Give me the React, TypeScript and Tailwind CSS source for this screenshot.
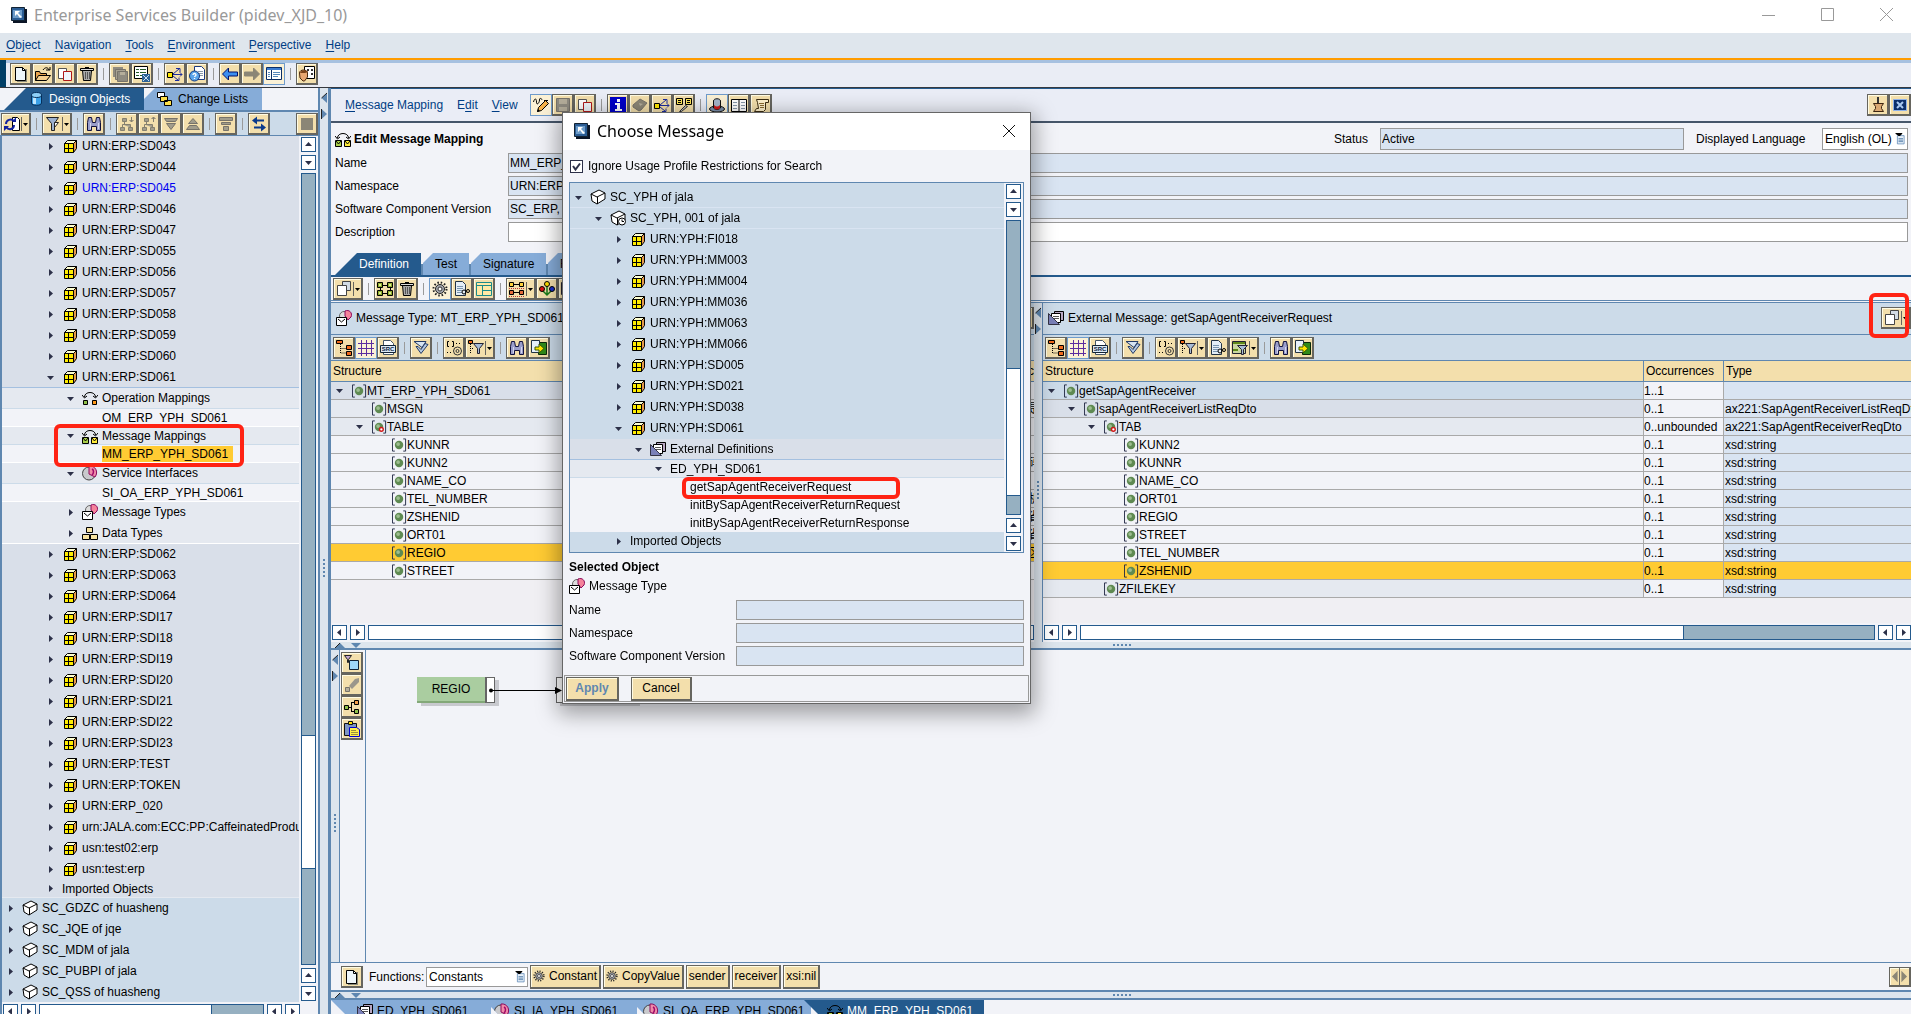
import { ReactNode } from "react";

/* ---------- Icons (16x16 grid) ---------- */

const ICONS: Record<string, ReactNode> = {
  app: (
    <>
      <path d="M2 2h14v14H2z" fill="#0b1526" />
      <path d="M.5.5h13v13H.5z" fill="#2b5d94" stroke="#123" />
      <path d="M2 3h9v8H2z" fill="#6d9cc9" />
      <path d="M4 4h5L7 6l4 4-2 1-3-4-2 2z" fill="#fff" />
    </>
  ),
  page: (
    <>
      <path d="M4 3h10v13H4z" fill="#8b8b7a" />
      <path d="M2.500 1.500h7l3 3v10h-10z" fill="#eef6fb" stroke="#000" />
      <path d="M9.500 1.500v3h3" stroke="#000" />
    </>
  ),
  open: (
    <>
      <path d="M.5 14.500v-9h4l1 2h6v2" fill="#e8a34d" stroke="#000" />
      <path d="M.5 14.500l3-5h12l-4 5z" fill="#f7d08e" stroke="#000" />
      <path d="M8 4c2-3 5-3 6 0m-3 0h4V1" stroke="#000" />
    </>
  ),
  copy: (
    <>
      <path d="M1.500 2.500h8v10h-8z" fill="#fff" stroke="#555" />
      <path d="M6.500 5.500h8v9h-8z" fill="#eef6fb" stroke="#b01818" />
    </>
  ),
  trash: (
    <>
      <path d="M3.500 4.500h9l-1 10h-7z" fill="#aaa" stroke="#000" />
      <path d="M1.500 2.500h13v2h-13zM6 1.500h4" fill="#ddd" stroke="#000" />
      <path d="M6.500 6v7M8.500 6v7M10.500 6v7" stroke="#555" />
    </>
  ),
  saveAll: (
    <>
      <path d="M1 1h10v10H1z" fill="#8f8b80" />
      <path d="M3.500 3.500h10v10h-10z" fill="#a8a292" stroke="#77736a" />
      <path d="M5.500 5.500h10v10h-10z" fill="#8f8b80" stroke="#77736a" />
      <path d="M8 6h5v3H8z" fill="#b5ae9b" />
    </>
  ),
  listX: (
    <>
      <path d="M.5.5h13v12H.5z" fill="#fff" stroke="#000" />
      <path d="M2 3.500h3m1 0h6M2 6.500h3m1 0h6M2 9.500h3m1 0h2" stroke="#275c28" />
      <path d="M8 8h8v8H8z" fill="#2d6296" />
      <path d="M9 9l6 6m0-6l-6 6" stroke="#cfe0f2" />
    </>
  ),
  whereUsed: (
    <>
      <path d="M.5 6.500h5v5h-5z" fill="#ffe800" stroke="#000" />
      <path d="M6 8.500h9M6 8l6-5M6 10l5 4M13 6.500l2 2-2 2M9 2.500h4v4M8 14.500h4v-3" stroke="#1d2c9c" />
    </>
  ),
  helpDoc: (
    <>
      <path d="M5.500.5h7l3 3v10h-10z" fill="#fff" stroke="#1b3a80" />
      <path d="M9 5.500h5M9 7.500h5M10 9.500h4" stroke="#89a" />
      <circle cx="5.500" cy="10" r="5" fill="#5aa4ea" stroke="#123a80" />
      <path d="M4 9c0-2 3-2 3 0 0 1-1 1-1.500 2m0 1v1" stroke="#fff" strokeWidth="1.300" />
    </>
  ),
  back: <path d="M.5 8l6-6v4h9v4h-9v4z" fill="#3c8ef0" stroke="#00106b" />,
  forward: <path d="M15.500 8l-6-6v4h-9v4h9v4z" fill="#8b8676" stroke="#8b8676" />,
  panel: (
    <>
      <path d="M.5 1.500h15v12H.5z" fill="#fff" stroke="#0a2d66" />
      <path d="M1 2h14v2H1z" fill="#3b7bd0" />
      <path d="M5.500 4v9" stroke="#0a2d66" />
      <path d="M2 6.500h2M2 8.500h2M2 10.500h2M7 6.500h7M7 8.500h7M7 10.500h5" stroke="#5588bb" />
    </>
  ),
  user: (
    <>
      <path d="M5.500.5h10v12h-10z" fill="#fff" stroke="#000" />
      <path d="M8 3h2v2H8zM12 3h2v2h-2zM12 7h2v2h-2z" fill="#333" />
      <path d="M.5 7c0-4 8-4 8 0v4l-3 4H4l-3-3z" fill="#e8a66f" stroke="#4a2a10" />
      <path d="M1 7c1-3 6-4 8-1L6 7z" fill="#7a4218" />
    </>
  ),
  refresh: (
    <>
      <path d="M8.500 1.500h5l2 2v11h-7z" fill="#fff" stroke="#000" />
      <path d="M2 8c0-4 5-6 8-3M10 9c0 4-5 6-8 2" stroke="#1020a0" strokeWidth="2" />
      <path d="M8 6h4V1zM5 10H0v5z" fill="#1020a0" />
    </>
  ),
  funnel: (
    <>
      <path d="M1.500 1.500h12l-4 6v7h-3v-7z" fill="#9bb0d0" stroke="#222" />
      <path d="M9.500 6.500h4l-4 5z" fill="#fff" stroke="#222" />
    </>
  ),
  binoculars: (
    <>
      <path d="M1.500 14.500v-8l1-5h3l1 5h3l1-5h3l1 5v8h-4v-4h-5v4z" fill="#9a9ecb" stroke="#10103c" />
      <path d="M4.500 7v6M12.500 7v6" stroke="#d5d7ef" />
    </>
  ),
  treeDown: (
    <path d="M3.500 2.500h4v3h-4zM1.500 11.500h4v3h-4zM9.500 11.500h4v3h-4zM5.500 6v3M3.500 8.500h8v3M3.500 8.500v3M12.500 1v5m-2-2l2 2 2-2" fill="#a29d8c" stroke="#85806f" />
  ),
  treeUp: (
    <path d="M3.500 2.500h4v3h-4zM1.500 11.500h4v3h-4zM9.500 11.500h4v3h-4zM5.500 6v3M3.500 8.500h8v3M3.500 8.500v3M12.500 6V1m-2 2l2-2 2 2" fill="#a29d8c" stroke="#85806f" />
  ),
  dblDown: <path d="M1.500 2.500h13l-2 3h-9zM3.500 7.500h9l-4.500 6z" fill="#a29d8c" stroke="#77736a" />,
  dblUp: <path d="M3.500 7.500l4.500-5 4.500 5zM1.500 13.500l3-4h7l3 4z" fill="#a29d8c" stroke="#77736a" />,
  collapse: <path d="M1.500 1.500h13v3h-13zM3.500 6.500h9v2h-9zM5.500 10.500h5v4h-5z" fill="#a29d8c" stroke="#77736a" />,
  swap: (
    <>
      <path d="M4 4.500h9M12 11.500H3" stroke="#0a3a8c" strokeWidth="2" />
      <path d="M6 .5v8l-5-4zM10 7.500v8l5-4z" fill="#0a3a8c" />
    </>
  ),
  square: <path d="M2 2h12v12H2z" fill="#8b8676" />,
  pencil: (
    <>
      <path d="M.5 5c1-4 3-4 3 0s3 1 3-2 2-1 3 0M11 3.500h4" stroke="#000" />
      <path d="M4.500 14.500l1-4 7-7 3 3-7 7z" fill="#f6b24a" stroke="#000" />
      <path d="M4 15l1-3 2 2z" fill="#000" />
    </>
  ),
  save: (
    <>
      <path d="M1.500 1.500h13v13h-13z" fill="#8f8b80" stroke="#77736a" />
      <path d="M4 2h8v5H4zM4 10h8v4H4z" fill="#b5ae9b" />
    </>
  ),
  info: (
    <>
      <path d="M0 0h16v16H0z" fill="#0000c8" />
      <path d="M7 2h3v3H7zM5 6h5v6h2v2H5v-2h2V8H5z" fill="#fff" />
    </>
  ),
  book: (
    <>
      <path d="M1 8l7-6 7 4-6 7-2 1-6-4z" fill="#8b8676" stroke="#77736a" />
      <path d="M7 6l4 1-3 2z" fill="#b5ae9b" />
    </>
  ),
  link: (
    <>
      <path d="M.5 1.500h6v6h-6zM9.500 1.500h6v6h-6z" fill="#ffe75a" stroke="#000" />
      <path d="M2 3.500h3M2 5.500h3M11 3.500h3M11 5.500h3" stroke="#000" />
      <path d="M3.500 14.500l6-6 2 1-6 5z" fill="#bbb" stroke="#333" />
    </>
  ),
  hat: (
    <>
      <ellipse cx="8" cy="12" rx="7.500" ry="3" fill="#7d90ac" stroke="#111" />
      <path d="M4.500 11V4c0-3 7-3 7 0v7c-2 2-5 2-7 0z" fill="#a7b7cc" stroke="#111" />
      <path d="M5 8c2 2 4 2 6 0v3c-2 2-4 2-6 0z" fill="#d01818" />
    </>
  ),
  columns: (
    <>
      <path d="M.5 2.500h15v12H.5z" fill="#fff" stroke="#000" />
      <path d="M8 2v13" stroke="#000" />
      <path d="M2 5.500h4M2 8.500h4M2 11.500h4M10 5.500h4M10 8.500h4M10 11.500h4" stroke="#89a" />
    </>
  ),
  scroll: (
    <>
      <path d="M3.500 2.500h12v3h-3v7l-2 2h-9l2-3h2l-1-6z" fill="#fff2cc" stroke="#3b2c10" />
      <path d="M6 6.500h5M7 8.500h4M7 10.500h4" stroke="#8a6a30" />
    </>
  ),
  pin: (
    <>
      <path d="M8 0v6" stroke="#333" strokeWidth="2" />
      <path d="M3.500 6.500h10l-2 3v2l2 3h-10l2-3v-2z" fill="#d9a873" stroke="#3b2410" />
    </>
  ),
  close: (
    <>
      <path d="M1.500 2.500h13v11h-13z" fill="#0c2f6b" stroke="#8fb2ea" />
      <path d="M5 5l6 6m0-6l-6 6" stroke="#a9c9f2" strokeWidth="2" />
    </>
  ),
  windows: (
    <>
      <path d="M6.500.5h8v9h-8z" fill="#d2dbe4" stroke="#444" />
      <path d="M1.500 4.500h9v10h-9z" fill="#fff" stroke="#444" />
    </>
  ),
  mapping: (
    <>
      <path d="M6 4.500h4M6 12.500h4M3.500 6v4M13.500 6v4" stroke="#000" />
      <path d="M.5 1.500h5v5h-5zM10.500 1.500h5v5h-5zM.5 9.500h5v5h-5zM10.500 9.500h5v5h-5z" fill="#8fae2c" stroke="#000" />
      <path d="M2 3h2v2H2zM12 3h2v2h-2zM2 11h2v2H2zM12 11h2v2h-2z" fill="#d9e89a" />
    </>
  ),
  gear: (
    <>
      <circle cx="8" cy="8" r="6.500" stroke="#222" strokeWidth="2" strokeDasharray="1.500 1.900" />
      <circle cx="8" cy="8" r="4.500" fill="#a4a7ad" stroke="#222" />
      <circle cx="8" cy="8" r="2" fill="#fff" stroke="#333" />
    </>
  ),
  docGlasses: (
    <>
      <path d="M1.500.5h7l3 3v11h-10z" fill="#e4eef6" stroke="#234" />
      <path d="M3 5.500h6M3 7.500h6M3 9.500h5M3 11.500h5" stroke="#7a96b0" />
      <circle cx="10" cy="11" r="2" stroke="#000" />
      <circle cx="14" cy="10" r="1.500" stroke="#000" />
    </>
  ),
  layout: (
    <>
      <path d="M.5 1.500h15v13H.5z" fill="#ffe9a6" stroke="#1a8a8a" />
      <path d="M1 4.500h14M6.500 5v9M7 9.500h8" stroke="#1a8a8a" />
    </>
  ),
  mapRows: (
    <>
      <path d="M5 3.500h5M5 11.500h5" stroke="#000" />
      <path d="M.5 1.500h4v4h-4zM10.500 1.500h4v4h-4z" fill="#ffd23a" stroke="#000" />
      <path d="M.5 9.500h4v4h-4zM10.500 9.500h4v4h-4z" fill="#e46a3a" stroke="#000" />
      <path d="M0 7.500h15M0 15.500h15" stroke="#b33" strokeDasharray="1 1" />
    </>
  ),
  colors: (
    <>
      <path d="M8 5v9M3 9l5 5 5-5" stroke="#187a18" strokeWidth="1.500" />
      <circle cx="8" cy="3" r="2.500" fill="#ffdf00" stroke="#000" />
      <circle cx="3" cy="8" r="2.500" fill="#e01010" stroke="#000" />
      <circle cx="13" cy="8" r="2.500" fill="#1830d0" stroke="#000" />
    </>
  ),
  treeRed: (
    <>
      <path d="M4.500 4v9h6M4.500 8.500h6" stroke="#000" strokeDasharray="1 1" />
      <path d="M.5.5h6v3h-6zM10.500 5.500h5v4h-5zM10.500 11.500h5v4h-5z" fill="#f06a1c" stroke="#000" />
    </>
  ),
  grid: <path d="M3.500 0v16M8.500 0v16M13.500 0v16M0 3.500h16M0 8.500h16M0 13.500h16" stroke="#5a2ca0" />,
  src: (
    <>
      <path d="M3.500.5h7l3 3v11h-10z" fill="#fff" stroke="#456" />
      <path d="M.5 5.500h15v7H.5z" fill="#dce9f5" stroke="#123" />
      <text x="8" y="11" fontSize="6" fontWeight="bold" textAnchor="middle" fill="#0a2040" fontFamily="Liberation Sans, sans-serif">
        SRC
      </text>
    </>
  ),
  check: (
    <>
      <path d="M1 1.500h12l-4 6z" fill="#d6e4f2" stroke="#223a66" />
      <path d="M3 6.500l5 7 7-9-3-1-4 6-3-3z" fill="#b4c8e2" stroke="#223a66" />
    </>
  ),
  attrs: (
    <>
      <path d="M3 1.500H1.500v5H3M6 1.500h1.500v5H6M10 3.500h1m2 0h1M1 12.500h1m2 0h1" stroke="#000" />
      <circle cx="11.500" cy="11" r="4" stroke="#333" />
      <circle cx="11.500" cy="11" r="1.500" stroke="#333" />
    </>
  ),
  funnelTree: (
    <>
      <path d="M2.500 4v10M2 8.500h4" stroke="#000" strokeDasharray="1 1" />
      <path d="M.5.5h4v3h-4z" fill="#f06a1c" stroke="#000" />
      <path d="M5.500 3.500h10l-4 5v5h-2v-5z" fill="#a9bcd6" stroke="#223" />
    </>
  ),
  funnelBox: (
    <>
      <path d="M.5 1.500h13v12H.5z" fill="#c9d7a0" stroke="#223" />
      <path d="M1 3h12M1 10h5" stroke="#5f8a1a" strokeWidth="2" />
      <path d="M5.500 5.500h10l-4 4v5h-2v-5z" fill="#a9bcd6" stroke="#223" />
    </>
  ),
  exportBox: (
    <>
      <path d="M7.500 2.500h8v12h-8z" fill="#2f8a1a" stroke="#0a2a08" />
      <path d="M.5.5h8v12h-8z" fill="#e6f0fa" stroke="#234" />
      <path d="M4 7h4V4l5 4.500L8 13v-3H4z" fill="#ffe600" stroke="#3a5a00" />
    </>
  ),
  newFn: (
    <>
      <path d="M5.500 5.500h9v9h-9z" fill="#9fd8f7" stroke="#123" />
      <path d="M.5.5h7l-3 4v3h-1v-3z" fill="#c3a5d0" stroke="#222" />
    </>
  ),
  tool: (
    <>
      <path d="M5 9l6-7 4-1v4l-7 7z" fill="#9a968b" />
      <path d="M1.500 10.500h4v4h-4z" fill="#b5ae9b" stroke="#77736a" />
    </>
  ),
  nodes: (
    <>
      <path d="M5 8.500h2M7.500 3v10M7 3.500h3M7 12.500h3" stroke="#000" />
      <path d="M.5 6.500h4v4h-4zM10.500 10.500h4v4h-4z" fill="#8fc04a" stroke="#000" />
      <path d="M10.500 1.500h4v4h-4z" fill="#f5a04a" stroke="#000" />
    </>
  ),
  paste: (
    <>
      <path d="M.5 2.500h12v12H.5z" fill="#7d95c4" stroke="#111" />
      <path d="M4.500 .5h4v3h-4z" fill="#ffe600" stroke="#111" />
      <path d="M5.500 6.500h7l3 2v7h-10z" fill="#fff04a" stroke="#0000d0" />
      <path d="M7 9.500h5M7 11.500h7M7 13.500h7" stroke="#998f40" />
    </>
  ),
  cylinder: (
    <>
      <path d="M2.500 4v8c0 3 10 3 10 0V4z" fill="#3aa0e8" stroke="#06305c" />
      <path d="M4 6v7h3V6z" fill="#bfe6ff" />
      <ellipse cx="7.500" cy="4" rx="5" ry="2.500" fill="#8fd0f8" stroke="#06305c" />
    </>
  ),
  changeList: (
    <>
      <path d="M.5 1.500h7v5h-7z" fill="#fff" stroke="#000" />
      <path d="M3.500 5.500h7v5h-7zM7.500 9.500h7v5h-7z" fill="#ffe14a" stroke="#000" />
    </>
  ),
  cube: (
    <>
      <path d="M2.500 5.500l3-3h9l-3 3z" fill="#ffffd0" stroke="#000" />
      <path d="M11.500 5.500l3-3v8l-3 4z" fill="#e59a4a" stroke="#000" />
      <path d="M2.500 5.500h9v9h-9z" fill="#ffec00" stroke="#000" />
      <path d="M6.500 6v8M3 10.500h8" stroke="#000" />
    </>
  ),
  box: (
    <>
      <path d="M1 5l8-4 6 3v6l-8 5-5-3z" fill="#fff" stroke="#000" />
      <path d="M1 5l6 3 8-4M7.500 8v7" stroke="#000" />
    </>
  ),
  boxClock: (
    <>
      <path d="M1 5l8-4 6 3v6l-8 5-5-3z" fill="#fff" stroke="#000" />
      <path d="M1 5l6 3 8-4M7.500 8v7" stroke="#000" />
      <circle cx="12" cy="11.500" r="3.500" fill="#fff" stroke="#000" />
      <path d="M12 9.500v2h2" stroke="#000" />
    </>
  ),
  opMap: (
    <>
      <path d="M2.500 7C2.500 1 13.500 1 13.500 7M0 5l2.500 3L5 6M16 5l-2.500 3L11 6" stroke="#000" />
      <path d="M1.500 10.500h4v4h-4z" fill="#8fc04a" stroke="#000" />
      <path d="M10.500 10.500h4v4h-4z" fill="#ff9a1a" stroke="#000" />
    </>
  ),
  msgMap: (
    <>
      <path d="M2.500 7C2.500 1 13.500 1 13.500 7M0 5l2.500 3L5 6M16 5l-2.500 3L11 6" stroke="#000" />
      <path d="M.5 9.500h6v6h-6z" fill="#a9cf4a" stroke="#000" />
      <path d="M9.500 9.500h6v6h-6z" fill="#ffec3a" stroke="#000" />
      <path d="M1 10l2.500 3L6 10M10 10l2.500 3 2.500-3" stroke="#000" />
    </>
  ),
  service: (
    <>
      <circle cx="7" cy="8.500" r="6.500" fill="#c9c9cc" stroke="#444" />
      <path d="M7 9V1c6-1 10 6 6 11z" fill="#f08aa8" stroke="#8c0a5c" />
      <path d="M10 4c2 1 2 4 0 6" stroke="#a00a6a" strokeWidth="1.500" />
    </>
  ),
  msgType: (
    <>
      <circle cx="8" cy="6" r="4.500" fill="#ddd" stroke="#666" />
      <path d="M9 6V1c4-2 8 2 6 6l-3 3z" fill="#f5829a" stroke="#8c0a5c" />
      <path d="M.5 7.500h10v8H.5z" fill="#fff" stroke="#000" />
      <path d="M2 9l3.500 3L9 9" stroke="#000" />
    </>
  ),
  dataType: <path d="M4.500 2.500h6v5h-6zM.5 9.500h7v5h-7zM8.500 9.500h7v5h-7z" fill="#f7e3a0" stroke="#000" />,
  extDef: (
    <>
      <path d="M6.500 1.500h9v9h-9z" fill="#b9a8c4" stroke="#000" />
      <path d="M3.500 3.500h9v9h-9z" fill="#fff" stroke="#000" />
      <path d="M5 6.500h6M5 8.500h6" stroke="#555" />
      <path d="M.5 3.500v11h11z" fill="#7a80b8" stroke="#334" />
    </>
  ),
  elem: (
    <>
      <path d="M3 1.500H.5v13H3M12 1.500h2.500v13H12" stroke="#222a44" />
      <circle cx="7.500" cy="8" r="4.500" fill="#5f8a52" />
      <circle cx="6.500" cy="7" r="2" fill="#9dbd90" />
    </>
  ),
  elemRep: (
    <>
      <path d="M3 1.500H.5v13H3M12 1.500h2.500v13H12" stroke="#222a44" />
      <circle cx="7.500" cy="8" r="4.500" fill="#5f8a52" />
      <circle cx="6.500" cy="7" r="2" fill="#9dbd90" />
      <circle cx="10" cy="10.500" r="2" fill="#fff" stroke="#d01818" strokeWidth="1.500" />
    </>
  ),
  dropList: (
    <>
      <path d="M4.500 3.500h9v11h-9z" fill="#e8f1fa" stroke="#5a86b4" />
      <path d="M6 7.500h6M6 9.500h6M6 11.500h6" stroke="#3d6c9c" />
      <path d="M2 0h9v1L8 4H6L2 1z" fill="#000" />
    </>
  ),
};

function Icon({ name, className = "size-4" }: { name: string; className?: string }) {
  return (
    <svg viewBox="0 0 16 16" fill="none" className={`shrink-0 ${className}`} aria-hidden="true">
      {ICONS[name]}
    </svg>
  );
}

/* ---------- Small controls ---------- */

const raised = "border-t border-l border-r-2 border-b-2 border-[#66655f] bg-[#f3dfac] shadow-[inset_1px_1px_0_#fffbe3]";

function ToolButton({ icon, pressed, menu }: { icon: string; pressed?: boolean; menu?: boolean }) {
  return (
    <button
      type="button"
      aria-label={icon}
      className={`flex h-[22px] shrink-0 items-start pt-[2px] pl-[2px] ${menu ? "w-[30px]" : "w-[22px]"} ${
        pressed ? "border border-[#6f9bcb] bg-[#fbf1d6]" : raised
      }`}
    >
      <Icon name={icon} />
      {menu && (
        <svg viewBox="0 0 8 16" className="h-4 w-2 shrink-0" aria-hidden="true">
          <path d="M1.500 1v14" stroke="#66655f" />
          <path d="M3 7h5L5.500 10z" fill="#000" />
        </svg>
      )}
    </button>
  );
}

function Sep() {
  return <span className="mx-[5px] h-3 w-px shrink-0 bg-[#9a9a9a]" />;
}

// "*" marks a pressed button, "+" one with a menu, "|" a separator
function Tools({ items }: { items: string }) {
  return (
    <div className="flex shrink-0 items-center">
      {items.split(" ").map((item, i) =>
        item === "|" ? (
          <Sep key={i} />
        ) : (
          <ToolButton key={i} icon={item.replace(/[*+]/, "")} pressed={item.endsWith("*")} menu={item.endsWith("+")} />
        )
      )}
    </div>
  );
}

function MenuLink({ text, at = 0 }: { text: string; at?: number }) {
  return (
    <a href="#" className="text-[#003d84]">
      {text.slice(0, at)}
      <span className="underline underline-offset-2">{text[at]}</span>
      {text.slice(at + 1)}
    </a>
  );
}

const ARROWS: Record<string, string> = {
  up: "M2 7h7L5.500 3z",
  down: "M2 4h7L5.500 8z",
  left: "M7 2v7L3 5.500z",
  right: "M4 2v7L8 5.500z",
};

function Arrow({ dir }: { dir: string }) {
  return (
    <svg viewBox="0 0 11 11" className="size-[11px] shrink-0" aria-hidden="true">
      <path d={ARROWS[dir]} fill="#2c3048" />
    </svg>
  );
}

function ScrollButton({ dir }: { dir: string }) {
  return (
    <button type="button" aria-label={`Scroll ${dir}`} className="flex size-[15px] shrink-0 items-center justify-center border border-[#245a8d] bg-white">
      <Arrow dir={dir} />
    </button>
  );
}

// before / thumb are percentages of the track
function VScroll({ before, thumb }: { before: number; thumb: number }) {
  return (
    <div className="flex w-[19px] shrink-0 flex-col items-center gap-[3px] bg-[#f2f3f8] py-px">
      <ScrollButton dir="up" />
      <ScrollButton dir="down" />
      <div className="w-[15px] flex-1 border border-[#245a8d] bg-[#96b0c1]">
        <div style={{ height: `${before}%` }} />
        <div className="border-y border-[#245a8d] bg-white" style={{ height: `${thumb}%` }} />
      </div>
      <ScrollButton dir="up" />
      <ScrollButton dir="down" />
    </div>
  );
}

function HScroll({ thumb }: { thumb: number }) {
  return (
    <div className="flex shrink-0 items-center gap-[3px] bg-[#f2f3f8] py-[2px] pl-px">
      <ScrollButton dir="left" />
      <ScrollButton dir="right" />
      <div className="h-[15px] flex-1 border border-[#245a8d] bg-[#96b0c1]">
        <div className="h-full border-r border-[#245a8d] bg-white" style={{ width: `${thumb}%` }} />
      </div>
      <ScrollButton dir="left" />
      <ScrollButton dir="right" />
    </div>
  );
}

function VSplitter() {
  return (
    <div className="flex w-2 shrink-0 flex-col items-center bg-[#dde5ed] pt-[4px]">
      <svg viewBox="0 0 8 30" className="h-[30px] w-2" aria-hidden="true">
        <path d="M7 1v10L1.500 6z" fill="#5f87b0" />
        <path d="M7 1L1.500 6" stroke="#222" />
        <path d="M1.500 17v10L7 22z" fill="#5f87b0" />
        <path d="M1.500 17v10" stroke="#222" />
      </svg>
      <div className="flex flex-1 flex-col items-center justify-center gap-[2px]">
        {[0, 1, 2, 3, 4].map((i) => (
          <span key={i} className="size-[2px] bg-[#5f87b0]" />
        ))}
      </div>
    </div>
  );
}

function HSplitter() {
  return (
    <div className="flex h-[6px] shrink-0 items-center bg-[#dde5ed]">
      <div className="w-1/2">
        <svg viewBox="0 0 34 6" className="ml-[3px] h-[6px] w-[34px]" aria-hidden="true">
          <path d="M1 6l5-5 5 5z" fill="#5f87b0" />
          <path d="M1 6l5-5" stroke="#222" />
          <path d="M17 1h10l-5 5z" fill="#5f87b0" />
        </svg>
      </div>
      <div className="flex -translate-x-2 gap-[2px]">
        {[0, 1, 2, 3, 4].map((i) => (
          <span key={i} className="size-[2px] bg-[#5f87b0]" />
        ))}
      </div>
    </div>
  );
}

function Combo({ id, value, className }: { id: string; value: string; className: string }) {
  return (
    <div className={`flex shrink-0 items-center border border-[#999] bg-white ${className}`}>
      <select id={id} defaultValue={value} className="min-w-0 flex-1 appearance-none bg-transparent pl-[2px] outline-none">
        <option>{value}</option>
      </select>
      <Icon name="dropList" className="mr-px size-[12px]" />
    </div>
  );
}

/* ---------- Trees ---------- */

interface TreeNode {
  text: string;
  level: number;
  icon?: string;
  state?: "open" | "closed";
  bg: string;
  line?: string;
  short?: boolean;
  blue?: boolean;
  selected?: boolean;
}

const L0 = "bg-[#ccdbe9]";
const L1 = "bg-[#d9dfe9]";
const L2 = "bg-[#e5e9f0]";
const LEAF = "bg-[#f2f3f8]";

const ns = (text: string, extra: Partial<TreeNode> = {}): TreeNode => ({
  text,
  level: 2,
  icon: "cube",
  state: "closed",
  bg: L1,
  ...extra,
});

const component = (text: string): TreeNode => ({ text, level: 0, icon: "box", state: "closed", bg: L0 });

const designTree: TreeNode[] = [
  ns("URN:ERP:SD043"),
  ns("URN:ERP:SD044"),
  ns("URN:ERP:SD045", { blue: true }),
  ns("URN:ERP:SD046"),
  ns("URN:ERP:SD047"),
  ns("URN:ERP:SD055"),
  ns("URN:ERP:SD056"),
  ns("URN:ERP:SD057"),
  ns("URN:ERP:SD058"),
  ns("URN:ERP:SD059"),
  ns("URN:ERP:SD060"),
  ns("URN:ERP:SD061", { state: "open", line: "border-b border-[#a4c0e0]" }),
  { text: "Operation Mappings", level: 3, icon: "opMap", state: "open", bg: L2, line: "border-b border-[#ccdbe9]" },
  { text: "OM_ERP_YPH_SD061", level: 4, bg: LEAF, short: true, line: "border-b border-white" },
  { text: "Message Mappings", level: 3, icon: "msgMap", state: "open", bg: L2, short: true, line: "border-b border-[#ccdbe9]" },
  { text: "MM_ERP_YPH_SD061", level: 4, bg: LEAF, short: true, selected: true, line: "border-b border-white" },
  { text: "Service Interfaces", level: 3, icon: "service", state: "open", bg: L2, line: "border-b border-[#ccdbe9]" },
  { text: "SI_OA_ERP_YPH_SD061", level: 4, bg: LEAF, short: true, line: "border-b border-white" },
  { text: "Message Types", level: 3, icon: "msgType", state: "closed", bg: L2 },
  { text: "Data Types", level: 3, icon: "dataType", state: "closed", bg: L2, line: "border-b border-white" },
  ns("URN:ERP:SD062"),
  ns("URN:ERP:SD063"),
  ns("URN:ERP:SD064"),
  ns("URN:ERP:SDI17"),
  ns("URN:ERP:SDI18"),
  ns("URN:ERP:SDI19"),
  ns("URN:ERP:SDI20"),
  ns("URN:ERP:SDI21"),
  ns("URN:ERP:SDI22"),
  ns("URN:ERP:SDI23"),
  ns("URN:ERP:TEST"),
  ns("URN:ERP:TOKEN"),
  ns("URN:ERP_020"),
  ns("urn:JALA.com:ECC:PP:CaffeinatedProducts"),
  ns("usn:test02:erp"),
  ns("usn:test:erp"),
  ns("Imported Objects", { icon: undefined, short: true, line: "border-b border-[#e5e9f0]" }),
  component("SC_GDZC of huasheng"),
  component("SC_JQE of jqe"),
  component("SC_MDM of jala"),
  component("SC_PUBPI of jala"),
  component("SC_QSS of huasheng"),
];

const messageTree: TreeNode[] = [
  { ...component("SC_YPH of jala"), state: "open", line: "border-b border-[#d9e4f2]" },
  { text: "SC_YPH, 001 of jala", level: 1, icon: "boxClock", state: "open", bg: L0, line: "border-b border-[#d9e4f2]" },
  ...["FI018", "MM003", "MM004", "MM036", "MM063", "MM066", "SD005", "SD021", "SD038"].map((n) => ns(`URN:YPH:${n}`, { bg: L0 })),
  ns("URN:YPH:SD061", { bg: L0, state: "open" }),
  { text: "External Definitions", level: 3, icon: "extDef", state: "open", bg: L1, line: "border-b border-[#a4c0e0]" },
  { text: "ED_YPH_SD061", level: 4, state: "open", bg: L2, short: true, line: "border-b border-[#ccdbe9]" },
  { text: "getSapAgentReceiverRequest", level: 5, bg: LEAF, short: true },
  { text: "initBySapAgentReceiverReturnRequest", level: 5, bg: LEAF, short: true },
  { text: "initBySapAgentReceiverReturnResponse", level: 5, bg: LEAF, short: true },
  ns("Imported Objects", { icon: undefined, bg: L0, short: true }),
];

function Tree({ nodes }: { nodes: TreeNode[] }) {
  return (
    <ul>
      {nodes.map((n) => (
        <li
          key={n.text}
          className={`flex items-center ${n.short ? "h-[18px]" : "h-[21px]"} ${n.bg} ${n.line ?? (n.short ? "" : "pb-px")} ${
            n.blue ? "text-[#0000f0]" : ""
          }`}
          style={{ paddingLeft: n.level * 20 }}
        >
          <span className="flex w-5 shrink-0 pl-[3px]">{n.state && <Arrow dir={n.state === "open" ? "down" : "right"} />}</span>
          {n.icon && (
            <span className="w-5 shrink-0">
              <Icon name={n.icon} />
            </span>
          )}
          <span className={n.selected ? "bg-[#ffcb33] pr-[5px]" : ""}>{n.text}</span>
        </li>
      ))}
    </ul>
  );
}

/* ---------- Message structures ---------- */

interface StructRow {
  name: string;
  level: number;
  open?: boolean;
  repeat?: boolean;
  bg: string;
  occ: string;
  type: string;
  desc?: string;
  selected?: boolean;
}

const field = (name: string, level: number, bg: string, extra: Partial<StructRow> = {}): StructRow => ({
  name,
  level,
  bg,
  occ: "0..1",
  type: "xsd:string",
  ...extra,
});

const sourceRows: StructRow[] = [
  field("MT_ERP_YPH_SD061", 0, L1, { open: true, occ: "1..1", type: "" }),
  field("MSGN", 1, L2, { desc: "是" }),
  field("TABLE", 1, L2, { open: true, repeat: true, occ: "0..unbounded", type: "" }),
  field("KUNNR", 2, LEAF),
  field("KUNN2", 2, LEAF, { desc: "码" }),
  field("NAME_CO", 2, LEAF),
  field("TEL_NUMBER", 2, LEAF, { desc: "机" }),
  field("ZSHENID", 2, LEAF, { desc: "省" }),
  field("ORT01", 2, LEAF, { desc: "省" }),
  field("REGIO", 2, LEAF, { desc: "区", selected: true }),
  field("STREET", 2, LEAF),
];

const targetRows: StructRow[] = [
  field("getSapAgentReceiver", 0, L0, { open: true, occ: "1..1", type: "" }),
  field("sapAgentReceiverListReqDto", 1, L1, { open: true, type: "ax221:SapAgentReceiverListReqDto" }),
  field("TAB", 2, L2, { open: true, repeat: true, occ: "0..unbounded", type: "ax221:SapAgentReceiverReqDto" }),
  field("KUNN2", 3, LEAF),
  field("KUNNR", 3, LEAF),
  field("NAME_CO", 3, LEAF),
  field("ORT01", 3, LEAF),
  field("REGIO", 3, LEAF),
  field("STREET", 3, LEAF),
  field("TEL_NUMBER", 3, LEAF),
  field("ZSHENID", 3, LEAF, { selected: true }),
  field("ZFILEKEY", 2, L2),
];

function StructTable({ rows, withDesc }: { rows: StructRow[]; withDesc?: boolean }) {
  const th = "overflow-hidden border-b border-[#5f87b0] px-[2px] text-left font-normal whitespace-nowrap";
  const td = "overflow-hidden border-b border-[#a9a9a9] p-0 whitespace-nowrap";
  return (
    <table className="w-full table-fixed border-separate border-spacing-0">
      <thead>
        <tr className="h-[21px] bg-[#f3dfac]">
          <th className={th}>Structure</th>
          <th className={`${th} w-[80px] border-l border-l-[#5f87b0]`}>Occurrences</th>
          <th className={`${th} w-[188px] border-l border-l-[#5f87b0]`}>Type</th>
          {withDesc && <th className="w-[6px] overflow-hidden border-b border-[#5f87b0] p-0 text-left font-normal">c</th>}
        </tr>
      </thead>
      <tbody>
        {rows.map((r) => {
          const sel = "bg-[#ffcb33]";
          return (
            <tr key={r.name} className="h-[18px]">
              <td className={`${td} ${r.selected ? sel : r.bg}`}>
                <div className="flex h-[17px] items-center" style={{ paddingLeft: r.level * 20 }}>
                  <span className="flex w-[21px] shrink-0 pl-[3px]">{r.open && <Arrow dir="down" />}</span>
                  <Icon name={r.repeat ? "elemRep" : "elem"} className="h-4 w-[15px]" />
                  {r.name}
                </div>
              </td>
              <td className={`${td} border-l border-l-[#a9a9a9] ${r.selected ? sel : LEAF}`}>{r.occ}</td>
              <td className={`${td} border-l border-l-[#a9a9a9] pl-px ${r.selected ? sel : "bg-[#d9e4f2]"}`}>{r.type}</td>
              {withDesc && <td className={`${td} ${r.selected ? sel : LEAF}`}>{r.desc}</td>}
            </tr>
          );
        })}
      </tbody>
    </table>
  );
}

interface MessagePaneProps {
  icon: string;
  title: string;
  tools: string;
  rows: StructRow[];
  thumb: number;
  withDesc?: boolean;
  marked?: boolean;
  className: string;
}

function MessagePane({ icon, title, tools, rows, thumb, withDesc, marked, className }: MessagePaneProps) {
  return (
    <section className={`flex min-w-0 flex-col bg-[#f0eff3] ${className}`}>
      <div className="relative flex h-8 items-center justify-between border-b border-[#5f87b0] bg-[#ccdbe9] pb-px pl-[5px]">
        <div className="flex items-center gap-1">
          <Icon name={icon} />
          {title}
        </div>
        <ToolButton icon="windows" menu />
        {marked && <span className="absolute top-[-10px] right-[2px] h-[45px] w-10 rounded-md border-4 border-[#ff2314]" />}
      </div>
      <div className="flex h-[26px] items-center border-b border-[#5f87b0] bg-[#ccdbe9] pl-[2px]">
        <Tools items={tools} />
      </div>
      <div className="h-[262px] overflow-hidden">
        <StructTable rows={rows} withDesc={withDesc} />
      </div>
      <HScroll thumb={thumb} />
    </section>
  );
}

/* ---------- Page parts ---------- */

function Designer() {
  return (
    <aside className="flex w-[320px] shrink-0 flex-col border-r-2 border-[#5f87b0]">
      <div role="tablist" className="flex h-[22px] shrink-0 bg-[#f2f3f8] pl-1">
        <button role="tab" type="button" className="flex w-[140px] items-center gap-1 bg-[#245a8d] pl-[25px] text-white [clip-path:polygon(22px_0,100%_0,100%_100%,0_100%)]">
          <Icon name="cylinder" />
          Design Objects
        </button>
        <button role="tab" type="button" className="flex w-[118px] items-center gap-[5px] bg-[#86acd8] pl-[13px] [clip-path:polygon(11px_0,100%_0,100%_100%,0_100%,0_11px)]">
          <Icon name="changeList" />
          Change Lists
        </button>
      </div>
      <div className="flex h-[26px] shrink-0 items-center justify-between border-t-2 border-b border-[#5f87b0] bg-[#ccdbe9] pl-px">
        <Tools items="refresh+ | funnel+ | binoculars | treeDown treeUp dblDown dblUp | collapse | swap" />
        <ToolButton icon="square" />
      </div>
      <div className="flex min-h-0 flex-1 border-l-2 border-[#5f87b0]">
        <div className="relative min-w-0 flex-1 overflow-hidden whitespace-nowrap">
          <Tree nodes={designTree} />
          <span className="absolute top-[288px] left-[52px] h-[43px] w-[190px] rounded-md border-4 border-[#ff2314]" />
        </div>
        <VScroll before={71} thumb={17} />
      </div>
      <div className="h-3 shrink-0 overflow-hidden border-l-2 border-[#5f87b0] bg-[#f2f3f8] pr-[18px]">
        <HScroll thumb={77} />
      </div>
    </aside>
  );
}

const fields = [
  { id: "name", label: "Name", value: "MM_ERP_YPH_SD061" },
  { id: "namespace", label: "Namespace", value: "URN:ERP:SD061" },
  { id: "swcv", label: "Software Component Version", value: "SC_ERP, 001 of jala" },
  { id: "description", label: "Description", value: "", editable: true },
];

function ObjectHeader() {
  return (
    <div className="flex shrink-0 flex-col gap-[3px] pt-[5px] pr-[3px] pb-[11px] pl-1">
      <div className="flex h-[22px] items-center gap-3">
        <h1 className="flex flex-1 items-center gap-[3px] font-bold">
          <Icon name="msgMap" />
          Edit Message Mapping
        </h1>
        <label htmlFor="status">Status</label>
        <input id="status" readOnly defaultValue="Active" className="h-[22px] w-[304px] border border-[#999] bg-[#d9e4f2] px-px" />
        <label htmlFor="language" className="w-[114px]">
          Displayed Language
        </label>
        <Combo id="language" value="English (OL)" className="h-[22px] w-[86px]" />
      </div>
      {fields.map((f) => (
        <div key={f.id} className="grid h-5 grid-cols-[173px_1fr] items-center">
          <label htmlFor={f.id}>{f.label}</label>
          <input id={f.id} readOnly={!f.editable} defaultValue={f.value} className={`h-5 border border-[#999] px-px ${f.editable ? "bg-white" : "bg-[#d9e4f2]"}`} />
        </div>
      ))}
    </div>
  );
}

function EditorTab({ text, width }: { text: string; width: string }) {
  return (
    <div className="flex bg-[linear-gradient(to_bottom,transparent_50%,#5f87b0_50%)]">
      <button role="tab" type="button" className={`h-[22px] bg-[#86acd8] pl-[14px] text-left [clip-path:polygon(12px_0,100%_0,100%_100%,2px_100%,2px_10px)] ${width}`}>
        {text}
      </button>
    </div>
  );
}

function MappingCanvas() {
  return (
    <div className="flex min-h-0 flex-1 border-b border-[#5f87b0]">
      <VSplitter />
      <div className="flex w-[27px] shrink-0 flex-col border-x border-[#5f87b0] pt-[2px] pl-px">
        <ToolButton icon="newFn" />
        <ToolButton icon="tool" />
        <ToolButton icon="nodes" />
        <ToolButton icon="paste" />
      </div>
      <div className="relative flex-1">
        <div className="absolute top-[27px] left-[51px] flex h-[26px] w-[78px] shadow-[4px_3px_0_#c8c9ce]">
          <div className="flex flex-1 items-center justify-center border-b-2 border-[#83a878] bg-[#aacda0]">REGIO</div>
          <div className="w-[10px] border border-l-2 border-[#666] bg-white" />
        </div>
        <div className="absolute top-[27px] left-[190px] h-[26px] w-[80px] border border-[#666] bg-white shadow-[4px_3px_0_#c8c9ce]" />
        <svg viewBox="0 0 76 10" className="absolute top-[35px] left-[122px] h-[10px] w-[76px]" aria-hidden="true">
          <circle cx="3" cy="5.500" r="2" />
          <path d="M3 5.500h66" stroke="#000" />
          <path d="M67 2v7l7-3.500z" />
        </svg>
      </div>
    </div>
  );
}

function FunctionBar() {
  const btn = `flex h-6 items-center gap-1 px-[2px] ${raised}`;
  return (
    <div className="flex h-[27px] shrink-0 items-center pl-[10px]">
      <ToolButton icon="page" />
      <label htmlFor="functions" className="w-[63px] pl-[6px]">
        Functions:
      </label>
      <Combo id="functions" value="Constants" className="h-5 w-[102px]" />
      <div className="flex flex-1 gap-[2px] pl-[2px]">
        <button type="button" className={btn}>
          <Icon name="gear" className="size-[12px]" /> Constant
        </button>
        <button type="button" className={btn}>
          <Icon name="gear" className="size-[12px]" /> CopyValue
        </button>
        <button type="button" className={btn}>sender</button>
        <button type="button" className={btn}>receiver</button>
        <button type="button" className={btn}>xsi:nil</button>
      </div>
      <button type="button" aria-label="Scroll functions" className={`h-5 w-[22px] ${raised}`}>
        <svg viewBox="0 0 20 18" className="h-full w-full" aria-hidden="true">
          <path d="M8 3v12L2 9zM12 3v12l6-6z" fill="#8b8676" />
          <path d="M10 0v18" stroke="#66655f" />
        </svg>
      </button>
    </div>
  );
}

function OpenTabs() {
  const tab = "-mr-[7px] flex h-[22px] shrink-0 items-center gap-1 pr-[10px] [clip-path:polygon(0_0,100%_0,100%_100%,22px_100%)]";
  return (
    <div role="tablist" className="h-[14px] shrink-0 overflow-hidden bg-[#f2f3f8]">
      <div className="flex h-[22px]">
        <button role="tab" type="button" className={`${tab} w-[160px] bg-[#86acd8] pl-[26px]`}>
          <Icon name="extDef" /> ED_YPH_SD061
        </button>
        <button role="tab" type="button" className={`${tab} w-[153px] bg-[#86acd8] pl-[10px]`}>
          <Icon name="service" /> SI_IA_YPH_SD061
        </button>
        <button role="tab" type="button" className={`${tab} w-[181px] bg-[#86acd8] pl-[13px]`}>
          <Icon name="service" /> SI_OA_ERP_YPH_SD061
        </button>
        <button role="tab" type="button" className={`${tab} w-[180px] bg-[#245a8d] pl-[23px] text-white`}>
          <Icon name="msgMap" /> MM_ERP_YPH_SD061
        </button>
      </div>
    </div>
  );
}

function Editor() {
  return (
    <main className="flex min-w-0 flex-1 flex-col border-l-3 border-[#5f87b0] bg-[#f2f3f8]">
      <div className="flex h-[35px] shrink-0 items-center border-t border-b-2 border-[#245a8d] border-b-[#46566a] bg-[#eaedf6] pl-[14px]">
        <nav className="flex w-[185px] shrink-0 gap-[14px]">
          <MenuLink text="Message Mapping" />
          <MenuLink text="Edit" at={1} />
          <MenuLink text="View" />
        </nav>
        <Tools items="pencil* save copy | info book whereUsed link | hat* columns scroll" />
        <div className="flex flex-1 justify-end">
          <Tools items="pin close" />
        </div>
      </div>
      <ObjectHeader />
      <div role="tablist" className="flex h-6 shrink-0 border-b-2 border-[#245a8d] pl-1">
        <button role="tab" type="button" className="w-[86px] bg-[#245a8d] pl-3 text-white [clip-path:polygon(22px_0,100%_0,100%_100%,0_100%)]">
          Definition
        </button>
        <EditorTab text="Test" width="w-[48px]" />
        <EditorTab text="Signature" width="w-[77px]" />
        <EditorTab text="Functions" width="w-[80px]" />
      </div>
      <div className="flex h-[26px] shrink-0 items-center border-b-3 border-double border-[#5f87b0] pl-[2px]">
        <Tools items="windows+ | mapping trash | gear* docGlasses layout | mapRows+ colors funnelBox" />
      </div>
      <div className="flex shrink-0">
        <MessagePane
          className="w-[703px] shrink-0"
          icon="msgType"
          title="Message Type: MT_ERP_YPH_SD061"
          tools="treeRed grid* src | check | attrs funnelTree+ | binoculars exportBox"
          rows={sourceRows}
          thumb={70}
          withDesc
        />
        <VSplitter />
        <MessagePane
          className="flex-1 border-l border-[#5f87b0]"
          icon="extDef"
          title="External Message: getSapAgentReceiverRequest"
          tools="treeRed grid* src | check | attrs funnelTree+ docGlasses funnelBox+ | binoculars exportBox"
          rows={targetRows}
          thumb={76}
          marked
        />
      </div>
      <HSplitter />
      <div className="h-[2px] shrink-0 bg-[#5f87b0]" />
      <MappingCanvas />
      <FunctionBar />
      <div className="h-[2px] shrink-0 bg-[#5f87b0]" />
      <HSplitter />
      <div className="h-[2px] shrink-0 bg-[#5f87b0]" />
      <OpenTabs />
    </main>
  );
}

function ChooseMessageDialog() {
  return (
    <div
      role="dialog"
      aria-label="Choose Message"
      className="fixed top-[112px] left-[562px] w-[469px] border border-[#666] bg-[#f2f3f8] shadow-[0_6px_20px_4px_rgba(0,0,0,0.35)]"
    >
      <div className="flex h-[37px] items-center bg-white pr-[14px] pb-[2px] pl-[11px]">
        <Icon name="app" />
        <h2 className="flex-1 pl-[7px] font-['Noto_Sans',sans-serif] text-base">Choose Message</h2>
        <button type="button" aria-label="Close">
          <svg viewBox="0 0 14 14" className="size-[14px]">
            <path d="M1 1l12 12M13 1L1 13" stroke="#111" />
          </svg>
        </button>
      </div>
      <div className="mt-2 ml-[7px] flex h-4 items-center gap-[5px]">
        <div className="grid size-[13px]">
          <input id="ignore" type="checkbox" defaultChecked className="peer size-[13px] appearance-none border border-[#2c3048] bg-white [grid-area:1/1]" />
          <svg viewBox="0 0 13 13" className="pointer-events-none invisible size-[13px] [grid-area:1/1] peer-checked:visible" aria-hidden="true">
            <path d="M3 6l2.500 3.500L10 3.500" fill="none" stroke="#2c3048" strokeWidth="2" />
          </svg>
        </div>
        <label htmlFor="ignore">Ignore Usage Profile Restrictions for Search</label>
      </div>
      <div className="mx-[6px] mt-2 flex h-[371px] border border-[#5f87b0] bg-[#ccdbe9]">
        <div className="relative flex-1 pt-1 whitespace-nowrap">
          <Tree nodes={messageTree} />
          <span className="absolute top-[294px] left-[112px] h-[22px] w-[218px] rounded-md border-4 border-[#ff2314]" />
        </div>
        <VScroll before={50} thumb={44} />
      </div>
      <div className="px-[6px] pt-[5px] pb-[9px]">
        <h3 className="h-[18px] leading-[18px] font-bold">Selected Object</h3>
        <div className="flex h-5 items-center gap-1">
          <Icon name="msgType" />
          Message Type
        </div>
        <div className="flex flex-col gap-[3px] pt-1">
          {fields.slice(0, 3).map((f) => (
            <div key={f.id} className="grid h-5 grid-cols-[167px_1fr] items-center">
              <label htmlFor={`sel-${f.id}`}>{f.label}</label>
              <input id={`sel-${f.id}`} readOnly className="h-5 border border-[#999] bg-[#d9e4f2]" />
            </div>
          ))}
        </div>
      </div>
      <div className="mx-px mb-px flex h-[27px] items-center gap-3 border border-[#999] pl-px">
        <button type="button" className={`h-6 w-[53px] font-bold text-[#5f87b0] ${raised}`}>
          Apply
        </button>
        <button type="button" className={`h-6 w-[61px] ${raised}`}>
          Cancel
        </button>
      </div>
    </div>
  );
}

export default function App() {
  return (
    <div className="flex h-screen flex-col overflow-hidden bg-[#f2f3f8] font-['Liberation_Sans','Noto_Sans_CJK_SC',sans-serif] text-xs leading-4 text-black">
      <header className="flex h-[33px] shrink-0 items-center bg-white pr-[18px] pb-1 pl-[11px]">
        <Icon name="app" />
        <span className="flex-1 pl-[7px] font-['Noto_Sans',sans-serif] text-base text-[#999]">Enterprise Services Builder (pidev_XJD_10)</span>
        <div className="flex gap-[46px]">
          {["M0 7.500h13", "M.5.5h12v12H.5z", "M0 0l13 13M13 0L0 13"].map((d) => (
            <button key={d} type="button" aria-label="Window control">
              <svg viewBox="0 0 13 13" className="size-[13px]">
                <path d={d} fill="none" stroke="#999" />
              </svg>
            </button>
          ))}
        </div>
      </header>
      <nav className="flex h-[27px] shrink-0 items-center gap-[14px] border-b-2 border-[#ff9c00] bg-[#dfe6ed] pb-px pl-[6px]">
        <MenuLink text="Object" />
        <MenuLink text="Navigation" />
        <MenuLink text="Tools" />
        <MenuLink text="Environment" />
        <MenuLink text="Perspective" />
        <MenuLink text="Help" />
      </nav>
      <div className="flex h-7 shrink-0 border-b border-[#36393f] bg-[#eaedf5]">
        <div className="w-[6px] bg-[#003e66]" />
        <div className="flex-1 border-t-3 border-[#a7c1e0] pl-1">
          <Tools items="page open copy trash | saveAll listX | whereUsed helpDoc | back forward panel* | user" />
        </div>
      </div>
      <div className="flex min-h-0 flex-1">
        <Designer />
        <VSplitter />
        <Editor />
      </div>
      <ChooseMessageDialog />
    </div>
  );
}
